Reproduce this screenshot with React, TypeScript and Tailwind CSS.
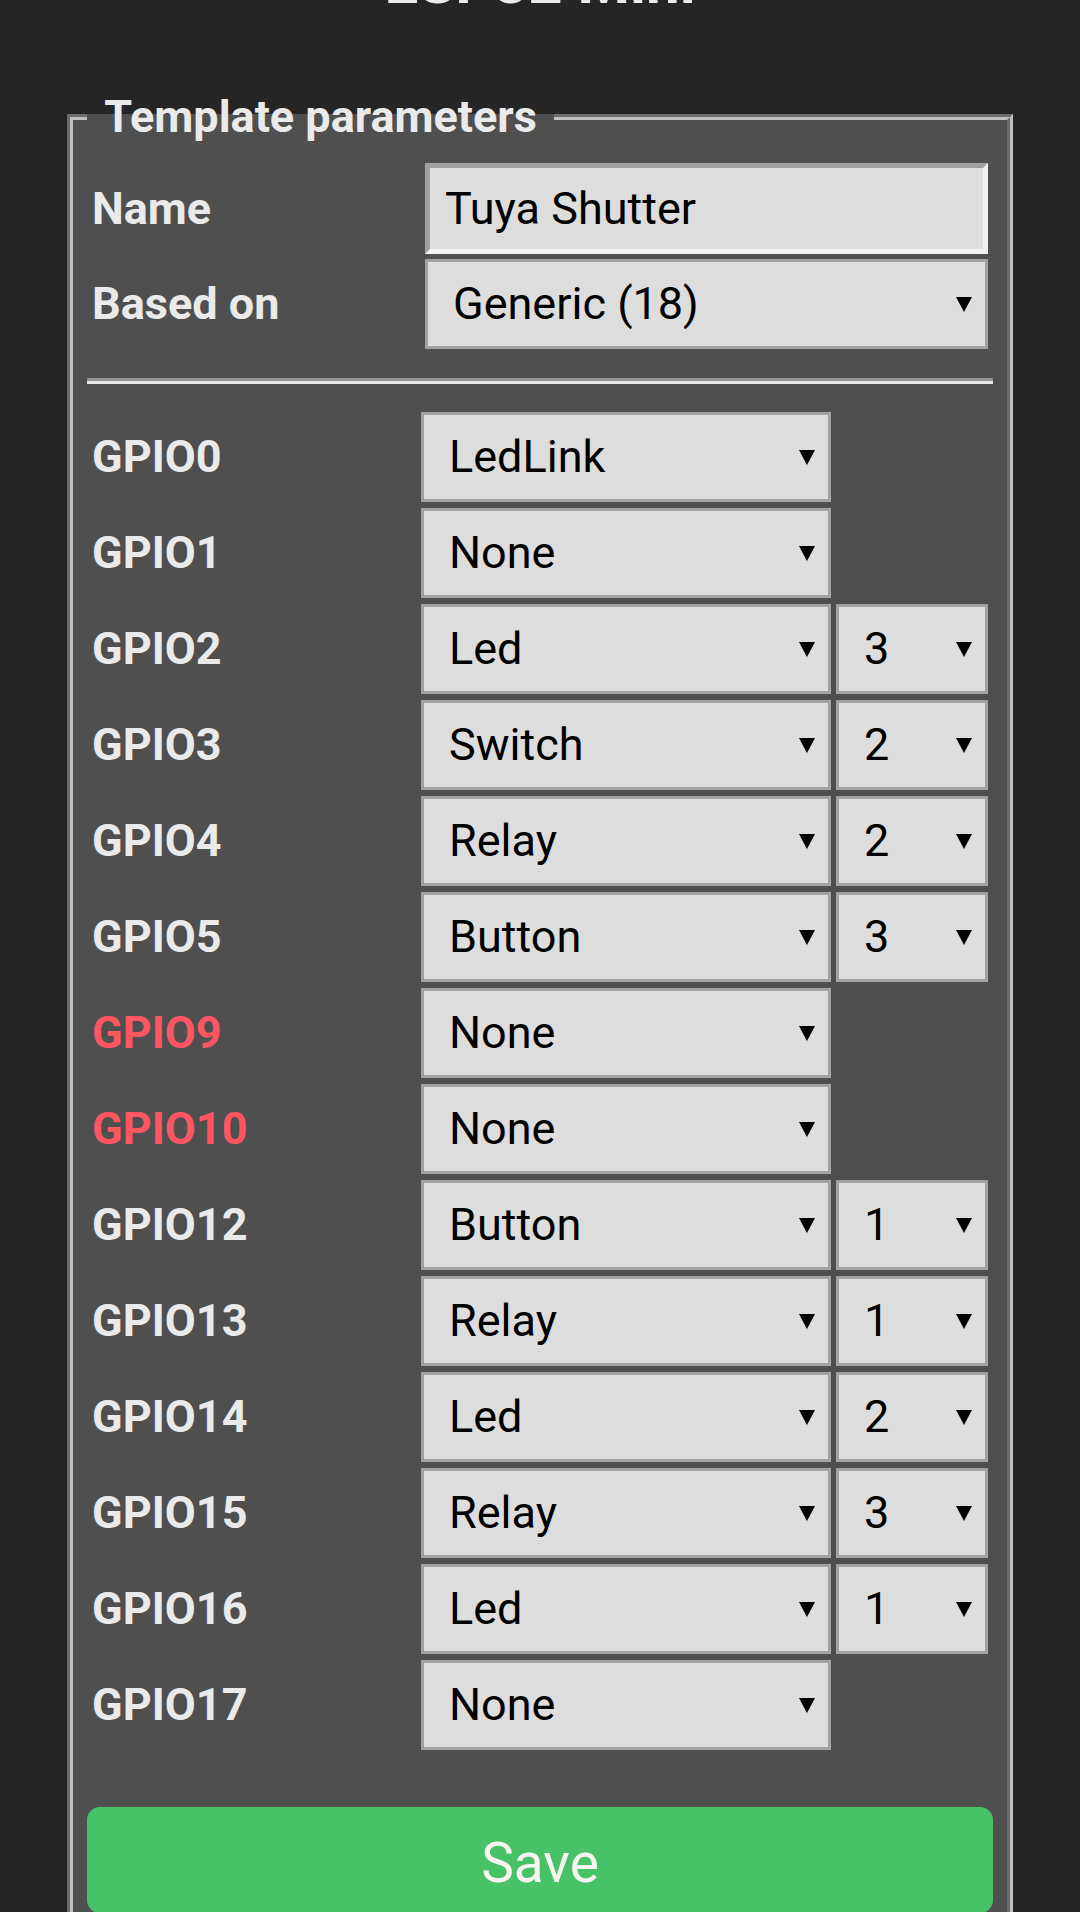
import React from "react";

type Pin = { name: string; fn: string; idx?: string; warn?: boolean };

const pins: Pin[] = [
  { name: "GPIO0", fn: "LedLink" },
  { name: "GPIO1", fn: "None" },
  { name: "GPIO2", fn: "Led", idx: "3" },
  { name: "GPIO3", fn: "Switch", idx: "2" },
  { name: "GPIO4", fn: "Relay", idx: "2" },
  { name: "GPIO5", fn: "Button", idx: "3" },
  { name: "GPIO9", fn: "None", warn: true },
  { name: "GPIO10", fn: "None", warn: true },
  { name: "GPIO12", fn: "Button", idx: "1" },
  { name: "GPIO13", fn: "Relay", idx: "1" },
  { name: "GPIO14", fn: "Led", idx: "2" },
  { name: "GPIO15", fn: "Relay", idx: "3" },
  { name: "GPIO16", fn: "Led", idx: "1" },
  { name: "GPIO17", fn: "None" },
];

function Arrow() {
  return (
    <svg width="16" height="15" viewBox="0 0 16 15" className="shrink-0">
      <path d="M0 0H16L8 15Z" fill="#000" />
    </svg>
  );
}

function Select({ value }: { value: string }) {
  return (
    <div className="flex h-[90px] items-center justify-between border-[3px] border-[#a2a2a2] bg-[#dddddd] pl-[25px] pr-[13px] text-black">
      <span>{value}</span>
      <Arrow />
    </div>
  );
}

function Label({ text, warn }: { text: string; warn?: boolean }) {
  return (
    <div className={`flex items-center font-bold ${warn ? "text-[#ff5661]" : "text-[#eaeaea]"}`}>
      {text}
    </div>
  );
}

export default function App() {
  return (
    <div className="flex h-[1912px] flex-col overflow-hidden bg-[#252525] font-[Roboto,sans-serif] text-[45px] text-[#eaeaea]">
      <h2 className="-mt-[52px] h-[70px] text-center text-[60px] font-bold leading-[70px]">ESP32 Mini</h2>

      <fieldset className="mx-[67px] mt-[73px] border-[6px] border-[#c0c0c0] bg-[#4f4f4f] px-[14px] pt-[14px] [border-style:groove]">
        <legend className="px-[6px] text-[45px] font-bold leading-[52px]">&nbsp;Template parameters&nbsp;</legend>

        <div className="mt-[6px] grid grid-cols-[328px_1fr] gap-x-[5px] gap-y-[5px] px-[5px]">
          <Label text="Name" />
          <div className="flex h-[91px] items-center border-[5px] border-b-[#f2f2f2] border-l-[#a0a0a0] border-r-[#f2f2f2] border-t-[#a0a0a0] bg-[#dddddd] pl-[15px] text-black">
            Tuya Shutter
          </div>
          <Label text="Based on" />
          <Select value="Generic (18)" />
        </div>

        <div className="mt-[29px] h-[6px] border-b-[3px] border-t-[3px] border-b-[#e6e6e6] border-t-[#939393]" />

        <div className="mt-[28px] grid grid-cols-[324px_410px_1fr] gap-x-[5px] gap-y-[6px] px-[5px]">
          {pins.map((p) => (
            <React.Fragment key={p.name}>
              <Label text={p.name} warn={p.warn} />
              <Select value={p.fn} />
              {p.idx ? <Select value={p.idx} /> : <div />}
            </React.Fragment>
          ))}
        </div>

        <button className="mt-[57px] h-[106px] w-full rounded-[13px] bg-[#47c266] pt-[6px] text-[55px] leading-[100px] text-[#faf4f0]">
          Save
        </button>
      </fieldset>
    </div>
  );
}
